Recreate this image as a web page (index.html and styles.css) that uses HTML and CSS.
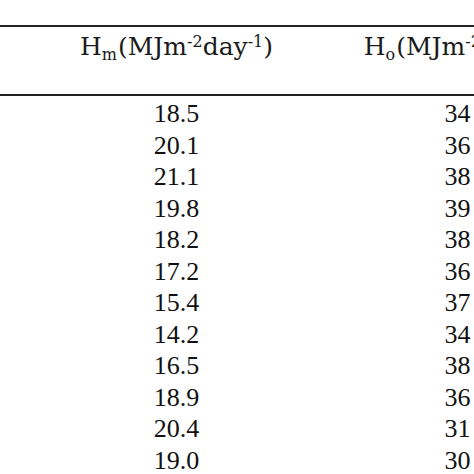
FILE: index.html
```html
<!DOCTYPE html>
<html>
<head>
<meta charset="utf-8">
<link rel="stylesheet" href="styles.css">
</head>
<body>
<div class="frame">
<table class="data">
  <colgroup>
    <col class="c0"><col class="c1"><col class="c2">
  </colgroup>
  <thead>
    <tr>
      <th></th>
      <th><span class="h">H<sub>m</sub>(MJm<sup>-2</sup>day<sup>-1</sup>)</span></th>
      <th><span class="h">H<sub>o</sub>(MJm<sup>-2</sup>day<sup>-1</sup>)</span></th>
    </tr>
  </thead>
  <tbody>
    <tr><td></td><td>18.5</td><td>34</td></tr>
    <tr><td></td><td>20.1</td><td>36</td></tr>
    <tr><td></td><td>21.1</td><td>38</td></tr>
    <tr><td></td><td>19.8</td><td>39</td></tr>
    <tr><td></td><td>18.2</td><td>38</td></tr>
    <tr><td></td><td>17.2</td><td>36</td></tr>
    <tr><td></td><td>15.4</td><td>37</td></tr>
    <tr><td></td><td>14.2</td><td>34</td></tr>
    <tr><td></td><td>16.5</td><td>38</td></tr>
    <tr><td></td><td>18.9</td><td>36</td></tr>
    <tr><td></td><td>20.4</td><td>31</td></tr>
    <tr><td></td><td>19.0</td><td>30</td></tr>
  </tbody>
</table>
</div>
</body>
</html>
```
FILE: styles.css
```css
html, body {
  margin: 0;
  padding: 0;
  background: #ffffff;
}
.frame {
  width: 474px;
  height: 474px;
  overflow: hidden;
  padding-top: 25px;
  box-sizing: border-box;
}
.data {
  border-collapse: collapse;
  table-layout: fixed;
  width: 598px;
  font-family: "Liberation Serif", "Times New Roman", serif;
  color: #111;
}
.c0 { width: 36px; }
.c1 { width: 281px; }
.c2 { width: 281px; }
thead tr {
  border-top: 2px solid #222;
  border-bottom: 2px solid #222;
}
th {
  font-weight: normal;
  height: 67px;
  padding: 0;
  vertical-align: top;
  text-align: center;
  white-space: nowrap;
}
.h {
  display: inline-block;
  font-family: "DejaVu Serif", "Liberation Serif", serif;
  font-size: 25px;
  line-height: 30px;
  margin-top: 5px;
  color: #1a1a1a;
}
.h sub {
  font-size: 16px;
  vertical-align: -5px;
  line-height: 0;
  margin-right: 1px;
}
.h sup {
  font-size: 16px;
  vertical-align: 8px;
  line-height: 0;
}
td {
  font-size: 26px;
  line-height: 31.5px;
  height: 31.5px;
  padding: 0;
  text-align: center;
}
tbody tr:first-child td {
  padding-top: 2px;
}
```
